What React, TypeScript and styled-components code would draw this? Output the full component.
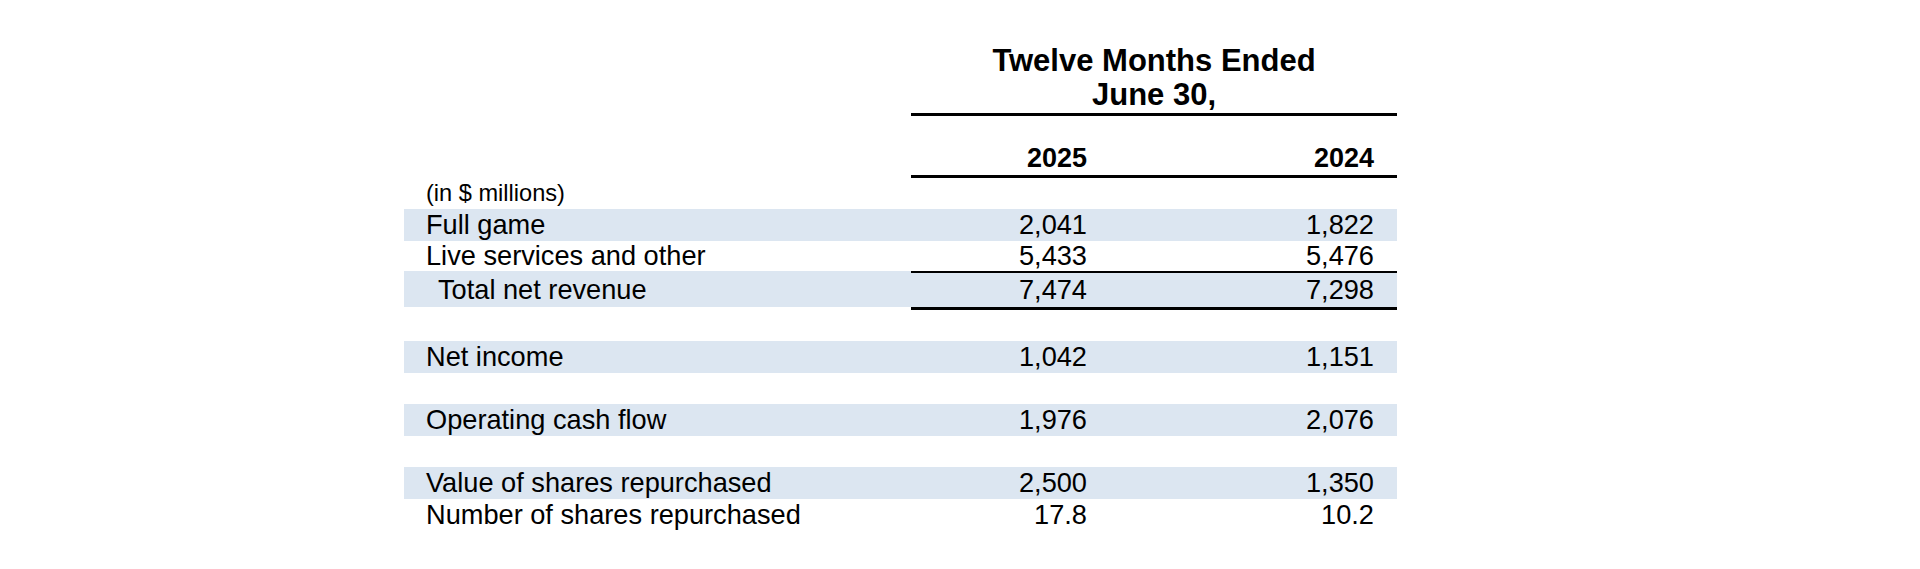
import React from "react";
import styled, { createGlobalStyle } from "styled-components";

const GlobalStyle = createGlobalStyle`
  html, body {
    margin: 0;
    padding: 0;
    background: #ffffff;
  }

  body {
    font-family: "Liberation Sans", Arial, sans-serif;
    color: #000000;
  }
`;

const Page = styled.main`
  padding: 44px 0 0 404px;
`;

const Table = styled.div`
  display: grid;
  grid-template-columns: 507px 186px 300px;
  width: 993px;
`;

const HeaderTitle = styled.div`
  grid-column: 2 / span 2;
  text-align: center;
  font-weight: 700;
  font-size: 31px;
  line-height: 34px;
  padding-bottom: 1px;
  border-bottom: 3px solid #000;
`;

const YearCell = styled.div<{ $pad: number }>`
  margin-top: 26px;
  text-align: right;
  font-weight: 700;
  font-size: 27px;
  line-height: 32px;
  padding-right: ${({ $pad }) => $pad}px;
  padding-bottom: 1px;
  border-bottom: 3px solid #000;
`;

const Units = styled.div`
  grid-column: 1 / span 3;
  padding-left: 22px;
  font-size: 23.6px;
  line-height: 31px;
`;

const Row = styled.div<{ $shaded?: boolean; $height: number }>`
  grid-column: 1 / span 3;
  display: grid;
  grid-template-columns: subgrid;
  align-items: end;
  background: ${({ $shaded }) => ($shaded ? "#dce6f1" : "transparent")};
  font-size: 27.2px;
  line-height: ${({ $height }) => $height}px;
`;

const Label = styled.div<{ $indent?: boolean }>`
  padding-left: ${({ $indent }) => ($indent ? 34 : 22)}px;
  white-space: nowrap;
`;

const Value = styled.div<{ $pad: number; $top?: boolean; $bottom?: boolean }>`
  text-align: right;
  padding-right: ${({ $pad }) => $pad}px;
  border-top: ${({ $top }) => ($top ? "2px solid #000" : "none")};
  border-bottom: ${({ $bottom }) => ($bottom ? "3px solid #000" : "none")};
  margin-bottom: ${({ $bottom }) => ($bottom ? "-3px" : "0")};
`;

const Spacer = styled.div<{ $height: number }>`
  grid-column: 1 / span 3;
  height: ${({ $height }) => $height}px;
`;

type Line = {
  label: string;
  a: string;
  b: string;
  shaded?: boolean;
  height: number;
  indent?: boolean;
  top?: boolean;
  bottom?: boolean;
  gapAfter?: number;
};

const lines: Line[] = [
  { label: "Full game", a: "2,041", b: "1,822", shaded: true, height: 32 },
  { label: "Live services and other", a: "5,433", b: "5,476", height: 30 },
  {
    label: "Total net revenue",
    a: "7,474",
    b: "7,298",
    shaded: true,
    height: 34,
    indent: true,
    top: true,
    bottom: true,
    gapAfter: 34,
  },
  { label: "Net income", a: "1,042", b: "1,151", shaded: true, height: 32, gapAfter: 31 },
  { label: "Operating cash flow", a: "1,976", b: "2,076", shaded: true, height: 32, gapAfter: 31 },
  { label: "Value of shares repurchased", a: "2,500", b: "1,350", shaded: true, height: 32 },
  { label: "Number of shares repurchased", a: "17.8", b: "10.2", height: 32 },
];

const App: React.FC = () => {
  return (
    <Page>
      <GlobalStyle />
      <Table>
        <div />
        <HeaderTitle>
          Twelve Months Ended
          <br />
          June 30,
        </HeaderTitle>
        <div />
        <YearCell $pad={10}>2025</YearCell>
        <YearCell $pad={23}>2024</YearCell>
        <Units>(in $ millions)</Units>
        {lines.map((line) => (
          <React.Fragment key={line.label}>
            <Row $shaded={line.shaded} $height={line.height}>
              <Label $indent={line.indent}>{line.label}</Label>
              <Value $pad={10} $top={line.top} $bottom={line.bottom}>
                {line.a}
              </Value>
              <Value $pad={23} $top={line.top} $bottom={line.bottom}>
                {line.b}
              </Value>
            </Row>
            {line.gapAfter ? <Spacer $height={line.gapAfter} /> : null}
          </React.Fragment>
        ))}
      </Table>
    </Page>
  );
};

export default App;
